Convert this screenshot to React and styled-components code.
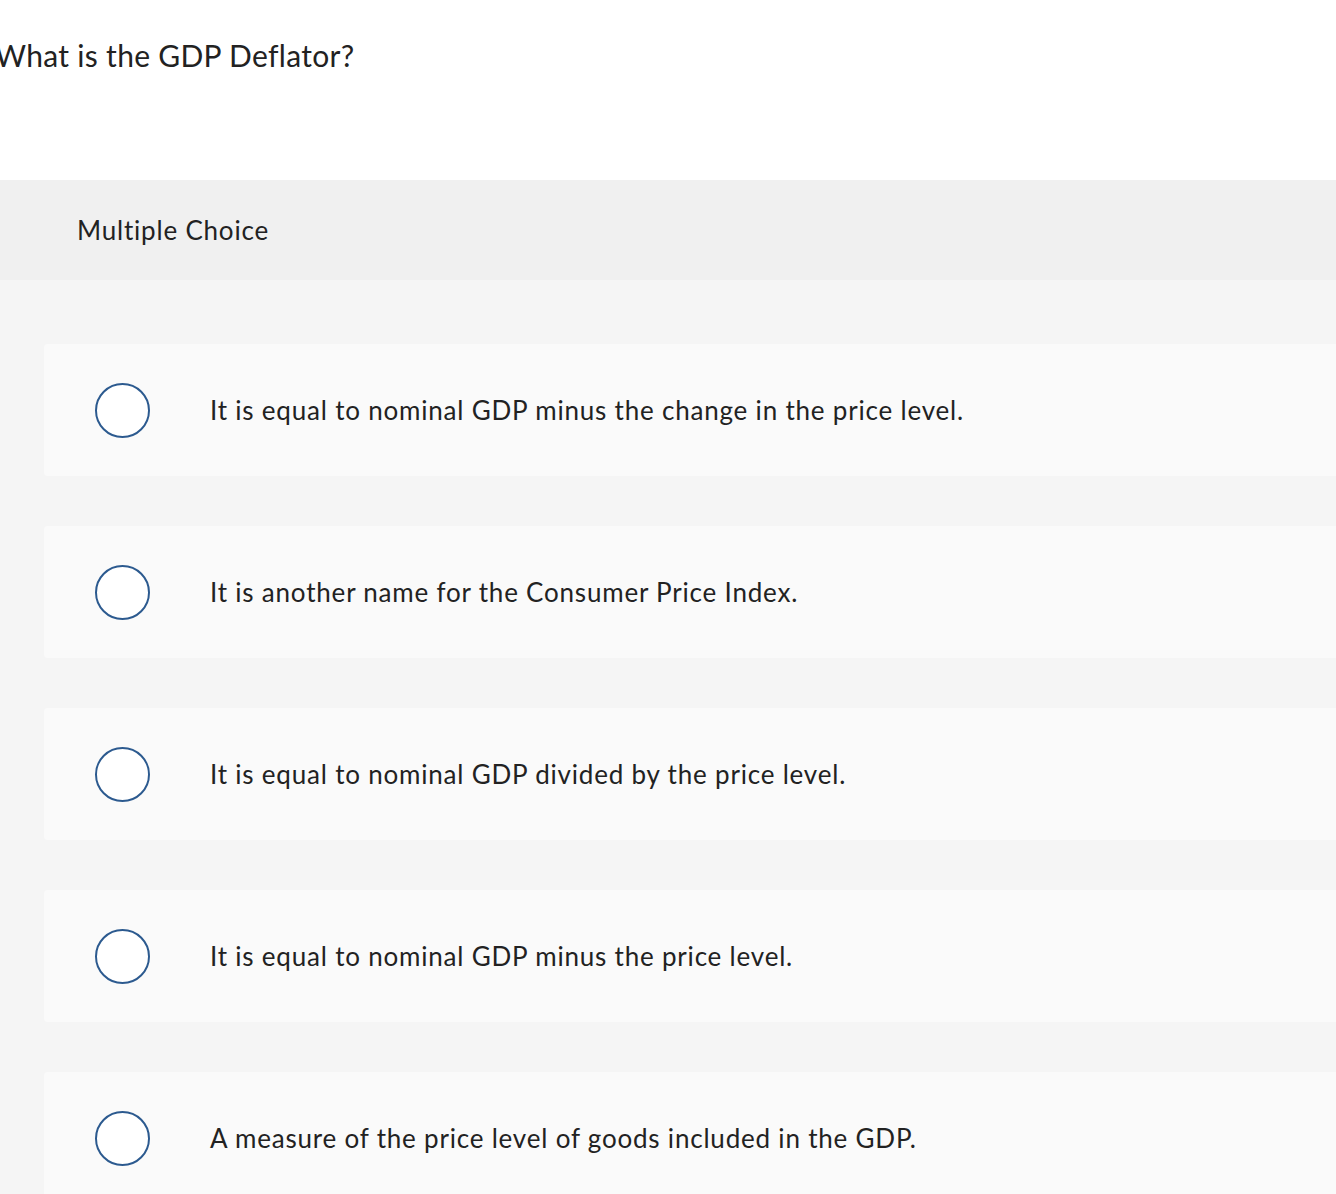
import React from "react";
import styled, { createGlobalStyle } from "styled-components";

const GlobalStyle = createGlobalStyle`
  html, body {
    margin: 0;
    padding: 0;
    background: #ffffff;
    overflow: hidden;
  }
  body {
    font-family: "Lato", "Liberation Sans", sans-serif;
    color: #222222;
  }
`;

const OPTIONS = [
  "It is equal to nominal GDP minus the change in the price level.",
  "It is another name for the Consumer Price Index.",
  "It is equal to nominal GDP divided by the price level.",
  "It is equal to nominal GDP minus the price level.",
  "A measure of the price level of goods included in the GDP.",
];

function App() {
  return (
    <StyledPage>
      <GlobalStyle />
      <StyledQuestion>
        <h1>What is the GDP Deflator?</h1>
      </StyledQuestion>
      <StyledBand>Multiple Choice</StyledBand>
      <StyledList>
        {OPTIONS.map((text) => (
          <StyledCard key={text}>
            <StyledRadio />
            <p>{text}</p>
          </StyledCard>
        ))}
      </StyledList>
    </StyledPage>
  );
}

const StyledPage = styled.div`
  width: 1400px;
  min-height: 1194px;
  background: #f5f5f5;
`;
const StyledQuestion = styled.div`
  height: 180px;
  background: #ffffff;
  h1 {
    margin: 0;
    padding-top: 36px;
    margin-left: -5px;
    font-size: 30px;
    font-weight: 400;
    letter-spacing: 0.3px;
    line-height: 38px;
    color: #222222;
  }
`;
const StyledBand = styled.div`
  height: 100px;
  display: flex;
  align-items: center;
  padding-left: 77px;
  background: #f0f0f0;
  font-size: 26px;
  letter-spacing: 0.8px;
  color: #222222;
`;
const StyledList = styled.div`
  display: flex;
  flex-direction: column;
  gap: 50px;
  padding: 64px 0 0 44px;
`;
const StyledCard = styled.div`
  height: 132px;
  display: flex;
  align-items: center;
  padding-left: 51px;
  background: #fafafa;
  border-radius: 4px;
  p {
    margin: 0 0 0 60px;
    font-size: 26px;
    letter-spacing: 0.8px;
    color: #222222;
  }
`;
const StyledRadio = styled.span`
  flex: none;
  width: 51px;
  height: 51px;
  border: 2px solid #2c5a8f;
  border-radius: 50%;
  background: #ffffff;
`;

export default App;
